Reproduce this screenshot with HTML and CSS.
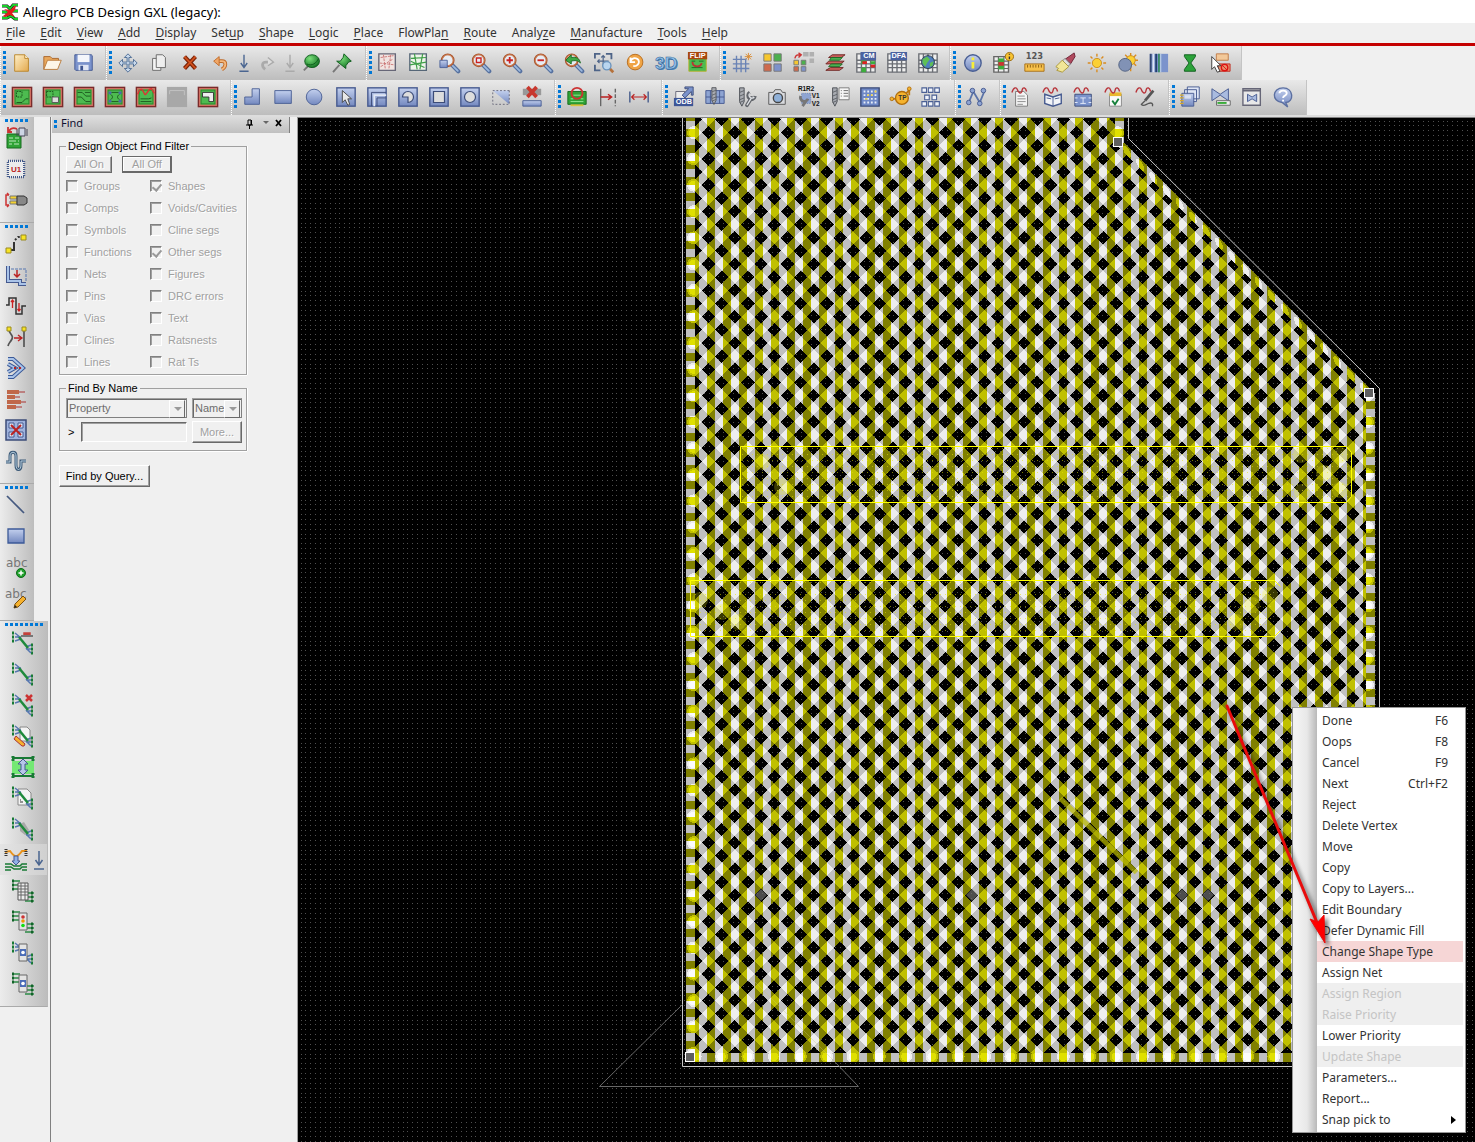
FILE: index.html
```html
<!DOCTYPE html>
<html lang="en">
<head>
<meta charset="utf-8">
<title>Allegro PCB Design GXL (legacy)</title>
<link rel="stylesheet" href="styles.css">
</head>
<body>
<svg class="defs" aria-hidden="true">
  <defs>
    <linearGradient id="gb" x1="0" y1="0" x2="0" y2="1"><stop offset="0" stop-color="#c3d0ee"/><stop offset="1" stop-color="#7388bf"/></linearGradient>
    <linearGradient id="go" x1="0" y1="0" x2="1" y2="1"><stop offset="0" stop-color="#fff0c8"/><stop offset="1" stop-color="#e3a94e"/></linearGradient>
    <radialGradient id="gg" cx=".35" cy=".3" r=".8"><stop offset="0" stop-color="#7be07b"/><stop offset="1" stop-color="#0b6a1c"/></radialGradient>
    <symbol id="pb" viewBox="0 0 24 24"><rect x="1.500" y="1.500" width="21" height="21" fill="#4dbb50" stroke="#7a2a2a" stroke-width="1.500"/><rect x="3" y="3" width="18" height="18" fill="none" stroke="#d86a62" stroke-width="1.500"/><rect x="4.500" y="4.500" width="15" height="15" fill="none" stroke="#2a8a2d"/></symbol>
    <symbol id="mg" viewBox="0 0 24 24"><path d="M14 14l7 7" stroke="#55709f" stroke-width="4.500" stroke-linecap="round"/><path d="M14 14l6.500 6.500" stroke="#9db9dd" stroke-width="2" stroke-linecap="round"/><circle cx="9.500" cy="9" r="6.500" fill="#e6ecf4" stroke="#a8522c" stroke-width="2"/><circle cx="9.500" cy="9" r="6" fill="none" stroke="#e8a070" stroke-width=".7"/></symbol>
    <symbol id="fr" viewBox="0 0 24 24"><rect x="2" y="2" width="20" height="20" fill="url(#gb)" stroke="#45598f" stroke-width="1.500"/></symbol>
    <symbol id="sq" viewBox="0 0 24 24"><path d="M1 7c2-6 5-6 6-3s4 6 5 1 4-3 5 1" fill="none" stroke="#b8343a" stroke-width="1.500"/></symbol>
    <symbol id="dl" viewBox="0 0 24 24"><path d="M1 2h3M1 6h3M1 10h3" stroke="#187a34" stroke-width="3" stroke-dasharray="2 1"/><path d="M4 2l6 5M4 6h6M4 10l6-2" stroke="#5677b0" stroke-width="1.500"/></symbol>
    <symbol id="dr" viewBox="0 0 24 24"><path d="M20 14h3M20 18h3M20 22h3" stroke="#187a34" stroke-width="3" stroke-dasharray="2 1"/><path d="M20 14l-5 2M20 18h-5M20 22l-5-5" stroke="#5677b0" stroke-width="1.500"/></symbol>
    <symbol id="fan" viewBox="0 0 24 24"><use href="#dl"/><use href="#dr"/><path d="M8 6l9 11" stroke="#1f8a3c" stroke-width="2.500"/></symbol>
    <symbol id="gl" viewBox="0 0 24 24"><path d="M1 2h8M1 6h8M1 10h8M14 14h9M14 18h9M14 22h9" stroke="#2b8b46" stroke-width="1.500"/><path d="M1 2h3M1 6h3M1 10h3M20 14h3M20 18h3M20 22h3" stroke="#126329" stroke-width="3" stroke-dasharray="2 1"/></symbol>
    <symbol id="wr" viewBox="0 0 24 24"><path d="M13 21l5-8" stroke="#63666c" stroke-width="4" stroke-linecap="round"/><path d="M16 7a4 4 0 1 0 6 4" fill="none" stroke="#63666c" stroke-width="3.500"/><path d="M13 21l5-8M16 8a3 3 0 1 0 5 4" fill="none" stroke="#dfe2e6" stroke-width="1.500"/></symbol>
    <symbol id="bit" viewBox="0 0 24 24"><path d="M5 2h5v15l-2.500 5L5 17z" fill="#a9acb2" stroke="#4c4f55"/><path d="M5 7l5-2M5 11l5-2M5 15l5-2M5 18l5-2" stroke="#5c5f65"/></symbol>
    <symbol id="tb" viewBox="0 0 24 24"><path d="M2 2h20v20H2z" fill="#efefef" stroke="#6b6e74" stroke-width="1.500"/><path d="M2 9h20M2 13h20M2 17h20M7 2v20M12 2v20M17 2v20" stroke="#6b6e74" stroke-width="1.500"/></symbol>
    <symbol id="da" viewBox="0 0 12 24"><path d="M6 3v13M2.500 12l3.500 5 3.500-5M1 21h10" fill="none" stroke="currentColor" stroke-width="1.500"/></symbol>
  </defs>
</svg>

<header class="titlebar">
  <svg class="logo" viewBox="0 0 18 18"><path d="M1 3h5l3 3 3-4h5M1 9h4l3 3M1 15h5l4-2 4 3h3M11 8h6" fill="none" stroke="#111" stroke-width="3"/><path d="M1 3h5l3 3 3-4h5M1 9h4l3 3M1 15h5l4-2 4 3h3M11 8h6" fill="none" stroke="#18d22b" stroke-width="1.800"/><path d="M2 13l5-4-4-3 6 1 6-5-1 5-3 3 3 4-5-2-5 2z" fill="#e31b1b"/></svg>
  <h1>Allegro PCB Design GXL (legacy):</h1>
</header>
<nav class="menubar">
  <button><u>F</u>ile</button><button><u>E</u>dit</button><button><u>V</u>iew</button><button><u>A</u>dd</button><button><u>D</u>isplay</button><button>Set<u>u</u>p</button><button><u>S</u>hape</button><button><u>L</u>ogic</button><button><u>P</u>lace</button><button>FlowPla<u>n</u></button><button><u>R</u>oute</button><button>Analy<u>z</u>e</button><button><u>M</u>anufacture</button><button><u>T</u>ools</button><button><u>H</u>elp</button>
</nav>

<div class="toolbars">
  <div class="toolrow">
    <div class="group">
      <button aria-label="New"><svg viewBox="0 0 24 24"><path d="M4 3h11l4 4v14H4z" fill="url(#go)" stroke="#b98329"/><path d="M15 3v4h4" fill="#fff4d8" stroke="#b98329"/></svg></button>
      <button aria-label="Open"><svg viewBox="0 0 24 24"><path d="M2 19V5h7l2 2h7v4" fill="#e9a85c" stroke="#a8652a"/><path d="M2 19L6 9h15l-4 10z" fill="#fdf6e8" stroke="#b97a3a"/></svg></button>
      <button aria-label="Save"><svg viewBox="0 0 24 24"><path d="M2 3h18l1 1v16H3l-1-1z" fill="#7b93cc" stroke="#3f5590"/><path d="M5 3h13v8H5z" fill="#f4f6fb"/><path d="M6 14h11v6H6z" fill="#e0e6f4"/><path d="M8 15h3v5H8z" fill="#3f5590"/></svg></button>
    </div>
    <div class="group">
      <button aria-label="Move"><svg viewBox="0 0 24 24"><path d="M12 2l4 4h-3v5h5V8l4 4-4 4v-3h-5v5h3l-4 4-4-4h3v-5H6v3l-4-4 4-4v3h5V6H8z" fill="#c9d9ec" stroke="#4d6b94"/></svg></button>
      <button aria-label="Copy"><svg viewBox="0 0 24 24"><path d="M5 7h9v13H5z" fill="#f4f4f4" stroke="#666"/><path d="M9 3h7l3 3v11H9z" fill="#eee" stroke="#666"/></svg></button>
      <button aria-label="Delete"><svg viewBox="0 0 24 24"><path d="M6 5l12 13M18 5L6 18" stroke="#7c2308" stroke-width="4.500"/><path d="M6 5l12 13M18 5L6 18" stroke="#d2511d" stroke-width="2"/></svg></button>
      <button aria-label="Undo"><svg viewBox="0 0 24 24"><path d="M7 10h6c5 0 5 6 0 9" fill="none" stroke="#bf6a28" stroke-width="4"/><path d="M7 10h6c5 0 5 6 0 9" fill="none" stroke="#f4b77c" stroke-width="2"/><path d="M4 10l6-5v10z" fill="#f0a767" stroke="#bf6a28"/></svg></button>
      <button class="thin steel" aria-label="Undo list"><svg viewBox="0 0 12 24"><use href="#da"/></svg></button>
      <button aria-label="Redo"><svg viewBox="0 0 24 24"><path d="M17 11h-6c-5 0-5 5-1 8" fill="none" stroke="#aaa" stroke-width="3"/><path d="M13 6l6 5-6 4" fill="#ddd" stroke="#aaa" stroke-width="1.500"/></svg></button>
      <button class="thin grey" aria-label="Redo list"><svg viewBox="0 0 12 24"><use href="#da"/></svg></button>
      <button aria-label="Unfix"><svg viewBox="0 0 24 24"><path d="M2 20l5-5" stroke="#777" stroke-width="2"/><ellipse cx="11" cy="10" rx="8" ry="7" fill="url(#gg)" stroke="#0b5a1a"/><path d="M5 13c6 3 11-1 13-6" fill="none" stroke="#0b5a1a"/></svg></button>
      <button aria-label="Fix"><svg viewBox="0 0 24 24"><path d="M0 22l7-8" stroke="#777" stroke-width="2"/><path d="M12 2l8 8-3 1-3 4v3L4 10h4l3-4z" fill="url(#gg)" stroke="#0b5a1a"/></svg></button>
    </div>
    <div class="group">
      <button aria-label="Unrats all"><svg viewBox="0 0 24 24"><path d="M2 2h18v18H2z" fill="#f1e3e0" stroke="#667" stroke-width="1.500"/><path d="M4 6l14-2M3 12l16 2M7 3l2 15M15 3l-2 15M4 16l13-8" stroke="#c77" stroke-dasharray="3 1"/></svg></button>
      <button aria-label="Rats all"><svg viewBox="0 0 24 24"><path d="M2 2h18v18H2z" fill="#eef4ea" stroke="#567" stroke-width="1.500"/><path d="M3 7l17-1M2 14l18-3M7 2l3 17M16 2l-3 17M3 10l15 7" stroke="#41a04a" stroke-width="1.300"/></svg></button>
      <button aria-label="Zoom points"><svg viewBox="0 0 24 24"><use href="#mg"/><path d="M1 9h8v8H1z" fill="url(#gb)" stroke="#4d6399"/></svg></button>
      <button aria-label="Zoom fit"><svg viewBox="0 0 24 24"><use href="#mg"/><path d="M7 6.500h5v5H7z" fill="none" stroke="#c22" stroke-width="1.500"/></svg></button>
      <button aria-label="Zoom in"><svg viewBox="0 0 24 24"><use href="#mg"/><path d="M6 9h7M9.500 5.500v7" stroke="#c22" stroke-width="2"/></svg></button>
      <button aria-label="Zoom out"><svg viewBox="0 0 24 24"><use href="#mg"/><path d="M6 9h7" stroke="#c22" stroke-width="2"/></svg></button>
      <button aria-label="Zoom previous"><svg viewBox="0 0 24 24"><use href="#mg"/><path d="M3 9l6-6v3c6-1 9 1 10 6-3-3-6-3-10-2v3z" fill="#3faa45" stroke="#1c6a25"/></svg></button>
      <button aria-label="Zoom selection"><svg viewBox="0 0 24 24"><path d="M1 7V2h6M13 2h6v6M1 14v6h6" fill="none" stroke="#4e6488" stroke-width="2"/><path d="M10 4v12M4 10h12M8 6l2-2 2 2M6 8l-2 2 2 2" fill="none" stroke="#4e6488" stroke-width="1.300"/><path d="M17 18l4 4" stroke="#b5713b" stroke-width="3"/><circle cx="14" cy="15" r="4.500" fill="#b9d5ef" stroke="#6b94bd" stroke-width="1.500"/></svg></button>
      <button aria-label="Redraw"><svg viewBox="0 0 24 24"><circle cx="11" cy="11" r="8.500" fill="#f0a445" stroke="#b56a1d"/><path d="M6 6v5h5M6 10c3-6 10-3 9 2-1 3-4 4-6 3" fill="none" stroke="#fff" stroke-width="2"/></svg></button>
      <button aria-label="3D canvas"><svg viewBox="0 0 24 24"><text class="three" x="0" y="20" fill="#4a7fb4">3D</text><text class="three" x="-1" y="19" fill="#8fc0e8" stroke="#315f92" stroke-width=".6">3D</text></svg></button>
      <button aria-label="Flip design"><svg viewBox="0 0 24 24"><path d="M2 7h19v14H2z" fill="#4dbb50" stroke="#b9b030"/><path d="M5 10h4M13 10h5M5 17h12" stroke="#1c6a25"/><path d="M6 11c0 6 9 6 10 1" fill="none" stroke="#b33" stroke-width="2"/><path d="M1 0h21v8H1z" fill="#a9480f"/><text class="tiny" x="3" y="7" fill="#fff">FLIP</text></svg></button>
    </div>
    <div class="group">
      <button aria-label="Grid toggle"><svg viewBox="0 0 24 24"><path d="M6 4v18M11 4v18M16 7v15M2 8h15M2 13h18M2 18h18" stroke="#6a83b5" stroke-width="1.500"/><path d="M19 1v8M15 5h8M16 2l6 6M22 2l-6 6" stroke="#d98b35"/></svg></button>
      <button aria-label="Color"><svg viewBox="0 0 24 24"><path d="M2 2h8v8H2z" fill="#f6c72f" stroke="#777"/><path d="M13 2h8v8h-8z" fill="#4db04d" stroke="#777"/><path d="M2 13h8v8H2z" fill="#cf6a4c" stroke="#777"/><path d="M13 13h8v8h-8z" fill="#7d92cb" stroke="#777"/></svg></button>
      <button aria-label="Color swap"><svg viewBox="0 0 24 24"><path d="M11 0h6v5h-6zM18 0h5v5h-5zM18 7h5v5h-5z" fill="#b0b0b0"/><path d="M1 9h5v5H1z" fill="#f6c72f" stroke="#777"/><path d="M9 9h5v5H9z" fill="#4db04d" stroke="#777"/><path d="M1 16h5v5H1z" fill="#cf6a4c" stroke="#777"/><path d="M9 16h5v5H9z" fill="#7d92cb" stroke="#777"/><path d="M2 7c1-4 3-4 6-4M6 1l3 2-3 3" fill="none" stroke="#c33" stroke-width="1.500"/></svg></button>
      <button aria-label="Cross section"><svg viewBox="0 0 24 24"><path d="M2 20h15l4-3H7zM2 13h16l4-3H5zM5 6h14l4-3H9z" fill="#c9605b" stroke="#6d2422"/><path d="M5 16h12l3-3H8zM6 9h11l3-3H8z" fill="#4caf50" stroke="#1c6a25"/></svg></button>
      <button aria-label="Constraint manager"><svg viewBox="0 0 24 24"><use href="#tb"/><path d="M7 9h5v4H7zM7 17h5v5H7zM17 10h5v3h-5z" fill="#3cae3c"/><path d="M8 10h5v3H8zM17 14h5v3h-5z" fill="#d22"/><path d="M6 0h17v9H6z" fill="#4a62a0"/><text class="tiny" x="9" y="7" fill="#fff">CM</text></svg></button>
      <button aria-label="DFA"><svg viewBox="0 0 24 24"><use href="#tb"/><path d="M5 0h18v9H5z" fill="#4a62a0"/><text class="tiny" x="6" y="7" fill="#fff">DFA</text></svg></button>
      <button aria-label="Global constraints"><svg viewBox="0 0 24 24"><use href="#tb"/><circle cx="12" cy="11" r="7" fill="#4f7fc0" stroke="#234"/><path d="M6 8l5-3 3 3-3 4-2 4-3-4zM14 12l4-2-1 5-3 1z" fill="#5fbf55"/></svg></button>
    </div>
    <div class="group">
      <button aria-label="Show element"><svg viewBox="0 0 24 24"><circle cx="13" cy="12" r="9" fill="url(#gb)" stroke="#4a5f94" stroke-width="1.500"/><path d="M13 6v3M13 11v7" stroke="#f8ee3a" stroke-width="3"/></svg></button>
      <button aria-label="Show constraints"><svg viewBox="0 0 24 24"><path d="M2 5h16v17H2z" fill="#eee" stroke="#666" stroke-width="1.500"/><path d="M2 10h16M2 14h16M2 18h16M7 5v17M13 5v17" stroke="#666" stroke-width="1.300"/><path d="M7 7h6v12H7z" fill="#3cae3c"/><path d="M7 11h6v4H7z" fill="#c33"/><circle cx="19" cy="5" r="4.500" fill="#f8c330" stroke="#9a6a10"/><path d="M19 2v1M19 5v3" stroke="#333" stroke-width="1.500"/></svg></button>
      <button aria-label="Measure"><svg viewBox="0 0 24 24"><text class="num" x="3" y="8" fill="#555">123</text><path d="M2 13h21v8H2z" fill="#f6c14c" stroke="#a66f18"/><path d="M5 14v3M8 14v3M11 14v3M14 14v3M17 14v3M20 14v3" stroke="#8a5a10"/></svg></button>
      <button aria-label="Highlight"><svg viewBox="0 0 24 24"><path d="M22 1l1 4-5 8-6-5z" fill="#b04a5e" stroke="#6d2033"/><path d="M12 7l6 6-3 3-6-6z" fill="#ddd" stroke="#777"/><path d="M9 9l7 7-7 6-6-2 2-2-3-2z" fill="#f2e698" stroke="#a89538"/></svg></button>
      <button aria-label="Sunny"><svg viewBox="0 0 24 24"><path d="M13 2v20M3 12h20M6 5l14 14M20 5L6 19" stroke="#d98b20" stroke-width="1.500"/><circle cx="13" cy="12" r="7" fill="#d6d6d6"/><circle cx="13" cy="12" r="5" fill="#fbd034" stroke="#c98c1d"/></svg></button>
      <button aria-label="Shadow mode"><svg viewBox="0 0 24 24"><path d="M16 1v20M7 9h17M10 3l12 12M22 3L10 15" stroke="#d98b20" stroke-width="1.500"/><circle cx="16" cy="9" r="5" fill="#fbd034" stroke="#c98c1d"/><circle cx="10" cy="14" r="7" fill="#8192b5" stroke="#4f5f80"/></svg></button>
      <button aria-label="Layer priority"><svg viewBox="0 0 24 24"><path d="M3 2h20v20H3z" fill="#7b93cc"/><path d="M4 2v20" stroke="#34466f" stroke-width="2"/><path d="M7 2v20" stroke="#dfe6f4" stroke-width="2"/><path d="M10 2v20" stroke="#25406f" stroke-width="2"/><path d="M13 2v20" stroke="#3f8f6a" stroke-width="2"/><path d="M15 2v20" stroke="#cfe0ee"/></svg></button>
      <button aria-label="Status"><svg viewBox="0 0 24 24"><path d="M7 3h12v2l-5 7 5 7v2H7v-2l5-7-5-7z" fill="#2ca23a" stroke="#0d5c1c"/></svg></button>
      <button aria-label="Cancel selection"><svg viewBox="0 0 24 24"><path d="M8 2h13v7H8z" fill="#f2c899" stroke="#c07a45"/><path d="M10 13h13v8H10z" fill="#e88f6b" stroke="#c02a20"/><circle cx="17" cy="17" r="3.500" fill="none" stroke="#d11" stroke-width="1.500"/><path d="M14 14l6 6" stroke="#d11"/><path d="M3 5v14l3-3 3 6 3-1-3-6h4z" fill="#fff" stroke="#333"/></svg></button>
    </div>
  </div>

  <div class="toolrow">
    <div class="group">
      <button aria-label="General edit"><svg viewBox="0 0 24 24"><use href="#pb"/><path d="M6 6h6v6H6z" fill="none" stroke="#1a541c" stroke-dasharray="2 1"/><path d="M6 18h6l4-4h3" fill="none" stroke="#1a541c"/></svg></button>
      <button aria-label="Placement edit"><svg viewBox="0 0 24 24"><use href="#pb"/><path d="M5 6h7v6H5z" fill="none" stroke="#1a541c" stroke-dasharray="2 1"/><path d="M11 12h7v6h-7z" fill="#ddd" stroke="#555"/></svg></button>
      <button aria-label="Etch edit"><svg viewBox="0 0 24 24"><use href="#pb"/><path d="M5 7h5l4 4h5M5 12h4l5 5h5M13 7h6" fill="none" stroke="#1a541c"/></svg></button>
      <button aria-label="Flow planning"><svg viewBox="0 0 24 24"><use href="#pb"/><path d="M8 7h8M8 17h8M7 9c3 2 3 4 0 6M17 9c-3 2-3 4 0 6" fill="none" stroke="#1a541c"/><path d="M5 6h3v3H5zM16 6h3v3h-3zM5 15h3v3H5zM16 15h3v3h-3z" fill="#4a6ba8"/></svg></button>
      <button aria-label="Signal integrity"><svg viewBox="0 0 24 24"><use href="#pb"/><path d="M3 9c3-8 5-6 7-1s4-6 8-5l3 5" fill="none" stroke="#d33" stroke-width="1.500"/><path d="M6 14h9l3-1M6 17h12" fill="none" stroke="#1a541c"/></svg></button>
      <button disabled aria-label="IC packaging"><svg viewBox="0 0 24 24"><path d="M1 1h22v22H1z" fill="#a8a8a8"/><path d="M4 9V5h16v5" fill="none" stroke="#c4c4c4"/></svg></button>
      <button aria-label="Shape edit"><svg viewBox="0 0 24 24"><use href="#pb"/><path d="M6 7h12v10h-5v-5H6z" fill="#eee" stroke="#333"/></svg></button>
    </div>
    <div class="group">
      <button aria-label="Shape polygon"><svg viewBox="0 0 24 24"><path d="M3 20v-8h8V3h8v17z" fill="url(#gb)" stroke="#4a5f94"/></svg></button>
      <button aria-label="Shape rectangle"><svg viewBox="0 0 24 24"><path d="M2 5h18v14H2z" fill="url(#gb)" stroke="#4a5f94"/></svg></button>
      <button aria-label="Shape circle"><svg viewBox="0 0 24 24"><circle cx="11" cy="12" r="8.500" fill="url(#gb)" stroke="#4a5f94"/></svg></button>
      <button aria-label="Select shape"><svg viewBox="0 0 24 24"><use href="#fr"/><path d="M8 5v13l3-3 3 6 2-1-2-6h4z" fill="#e8e8e8" stroke="#444"/></svg></button>
      <button aria-label="Edit boundary"><svg viewBox="0 0 24 24"><use href="#fr"/><path d="M6 22V7h16M12 22v-9h10" fill="none" stroke="#3c4c78"/><path d="M9 22V10h13" fill="none" stroke="#dfe6f4" stroke-width="2"/></svg></button>
      <button aria-label="Void polygon"><svg viewBox="0 0 24 24"><use href="#fr"/><path d="M12 12H6a6 6 0 1 1 6 6z" fill="#ddd" stroke="#3c4c78" stroke-width="1.300"/></svg></button>
      <button aria-label="Void rectangle"><svg viewBox="0 0 24 24"><use href="#fr"/><path d="M6 6h12v12H6z" fill="#ddd" stroke="#3c4c78" stroke-width="1.300"/></svg></button>
      <button aria-label="Void circle"><svg viewBox="0 0 24 24"><use href="#fr"/><circle cx="12" cy="12" r="6" fill="#ddd" stroke="#3c4c78" stroke-width="1.300"/></svg></button>
      <button aria-label="Void element"><svg viewBox="0 0 24 24"><path d="M3 5h18v15z" fill="url(#gb)"/><path d="M21 5v15H3V5z" fill="none" stroke="#667" stroke-dasharray="2 2"/></svg></button>
      <button aria-label="Delete islands"><svg viewBox="0 0 24 24"><path d="M2 3h20v7H2z" fill="#999"/><path d="M7 1l10 11M17 1L7 12" stroke="#c8382e" stroke-width="4"/><path d="M2 16h20v6H2z" fill="url(#gb)" stroke="#4a5f94"/></svg></button>
    </div>
    <div class="group">
      <button aria-label="Net short"><svg viewBox="0 0 24 24"><path d="M2 6h20v14H2z" fill="#2fa336" stroke="#176a1e"/><path d="M5 21h14" stroke="#d8c33a" stroke-width="2"/><path d="M5 14h3M16 14h3M5 17h14M8 10h8" stroke="#9e9"/><circle cx="12" cy="8" r="6" fill="none" stroke="#c33" stroke-width="2"/></svg></button>
      <button aria-label="Spacing"><svg viewBox="0 0 24 24"><path d="M4 3v19" stroke="#666" stroke-width="1.500"/><path d="M20 3v19" stroke="#666" stroke-width="1.500" stroke-dasharray="4 2"/><path d="M4 12h11M12 9l4 3-4 3" fill="none" stroke="#b22" stroke-width="1.500"/></svg></button>
      <button aria-label="Dimension"><svg viewBox="0 0 24 24"><path d="M2 6v12M22 6v12" stroke="#445a8a" stroke-width="1.500"/><path d="M4 12h16M7 9l-3 3 3 3M17 9l3 3-3 3" fill="none" stroke="#b22" stroke-width="1.300"/></svg></button>
    </div>
    <div class="group">
      <button aria-label="ODB export"><svg viewBox="0 0 24 24"><path d="M3 6h10v8H3z" fill="#eee" stroke="#667"/><path d="M10 10l7-7h-4V1h9v9h-2V6l-7 7z" fill="#7b93cc" stroke="#3c4c78"/><path d="M1 13h21v9H1z" fill="#3d5596"/><text class="tiny" x="3" y="20" fill="#fff">ODB</text></svg></button>
      <button aria-label="NC drill"><svg viewBox="0 0 24 24"><path d="M2 5h20v14H2zM2 12h20M7 5v14M17 5v14" fill="#8ea4d2" stroke="#45598f"/><svg x="4" width="24" height="24"><use href="#bit"/></svg></svg></button>
      <button aria-label="NC parameters"><svg viewBox="0 0 24 24"><use href="#bit"/><use href="#wr"/></svg></button>
      <button aria-label="Artwork"><svg viewBox="0 0 24 24"><path d="M3 7h5l2-3h6l2 3h3v13H3z" fill="#d7d9dd" stroke="#555"/><circle cx="13" cy="13" r="5" fill="#8fb0d8" stroke="#444" stroke-width="1.500"/></svg></button>
      <button aria-label="Auto rename"><svg viewBox="0 0 24 24"><path d="M5 8h10v11H5z" fill="#8ea4d2" stroke="#6a83b5" stroke-dasharray="1 1"/><path d="M6 22l5-7M4 11a3 3 0 1 0 8 3" fill="none" stroke="#777" stroke-width="3"/><text class="micro" x="1" y="5" fill="#111">R1R2</text><text class="micro" x="16" y="13" fill="#111">V1</text><text class="micro" x="16" y="22" fill="#111">V2</text></svg></button>
      <button aria-label="Drill legend"><svg viewBox="0 0 24 24"><use href="#bit"/><path d="M12 2h11v13H12z" fill="#f6f6f6" stroke="#777"/><path d="M14 5h1M17 5h5M14 8h1M17 8h5M14 11h1M17 11h5" stroke="#666"/></svg></button>
      <button aria-label="Thieving"><svg viewBox="0 0 24 24"><path d="M2 2h20v20H2z" fill="#6e88c6" stroke="#3c4c78" stroke-width="1.500"/><path d="M5 6h14M5 10h14M5 14h14M5 18h14" stroke="#e7edf8" stroke-width="2" stroke-dasharray="2 2"/><path d="M9 10h6M7 14h2M17 6h2" stroke="#f1d34a" stroke-width="2" stroke-dasharray="2 2"/></svg></button>
      <button aria-label="Testprep"><svg viewBox="0 0 24 24"><path d="M2 14h5M17 9l4-5v6" fill="none" stroke="#c07a10" stroke-width="2"/><circle cx="13" cy="13" r="7" fill="#f5b32d" stroke="#b06d0c" stroke-width="1.500"/><circle cx="21" cy="3" r="2" fill="#f5b32d" stroke="#b06d0c"/><circle cx="2" cy="14" r="2" fill="#f5b32d" stroke="#b06d0c"/><text class="micro" x="9" y="15" fill="#333">TP</text></svg></button>
      <button aria-label="Panelize"><svg viewBox="0 0 24 24"><path d="M1 2h5v5H1zM8 2h5v5H8zM15 2h5v5h-5zM4 10h5v5H4zM12 10h5v5h-5zM1 17h5v5H1zM8 17h5v5H8zM15 17h5v5h-5z" fill="#f0f4fb" stroke="#4a5f94" stroke-width="1.200"/></svg></button>
    </div>
    <div class="group">
      <button aria-label="Signal probe"><svg viewBox="0 0 24 24"><path d="M3 18l5-12 7 12 5-12" fill="none" stroke="#5c74a8" stroke-width="2"/><g fill="#8ea4d2" stroke="#45598f"><circle cx="3" cy="18" r="2.500"/><circle cx="7" cy="5" r="2.500"/><circle cx="15" cy="19" r="2.500"/><circle cx="19" cy="5" r="2.500"/></g></svg></button>
    </div>
    <div class="group">
      <button aria-label="Signal model"><svg viewBox="0 0 24 24"><path d="M5 6h9l4 4v12H5z" fill="#f4f4f4" stroke="#777"/><path d="M7 11h8M7 14h9M7 17h9M7 20h6" stroke="#888"/><use href="#sq"/></svg></button>
      <button aria-label="Signal library"><svg viewBox="0 0 24 24"><path d="M3 9l9 3 9-3v10l-9 3-9-3z" fill="#f2f4f8" stroke="#45598f" stroke-width="1.500"/><path d="M12 12v10M5 13l5 1M14 14l5-1" stroke="#45598f"/><use href="#sq"/></svg></button>
      <button aria-label="Model assign"><svg viewBox="0 0 24 24"><path d="M2 9h18v13H2z" fill="#7b93cc" stroke="#3c4c78"/><path d="M2 13h3M2 18h3M17 13h3M17 18h3M8 13h6M11 13v6M8 19h6" stroke="#e8eefa"/><use href="#sq"/></svg></button>
      <button aria-label="Signal audit"><svg viewBox="0 0 24 24"><path d="M6 9h13v13H6z" fill="#fafafa" stroke="#888"/><path d="M6 9h13" stroke="#e9b82f" stroke-width="4"/><path d="M9 16l3 4 4-6" fill="none" stroke="#15803a" stroke-width="2"/><use href="#sq"/></svg></button>
      <button aria-label="Probe"><svg viewBox="0 0 24 24"><path d="M20 5l-9 11" stroke="#555" stroke-width="3"/><path d="M11 16l-4 4c2 3 5 0 8-1s5 0 4 3" fill="none" stroke="#555" stroke-width="1.500"/><use href="#sq"/></svg></button>
    </div>
    <div class="group">
      <button aria-label="Reports"><svg viewBox="0 0 24 24"><path d="M8 1h13v13H8zM5 4h13v13H5z" fill="#dfe6f5" stroke="#45598f"/><path d="M2 8h13v14H2z" fill="url(#gb)" stroke="#45598f"/><path d="M5 11h7M5 13h7" stroke="#fff"/><path d="M0 10h4M0 13h4M0 16h4M0 19h4" stroke="#d8a92a" stroke-width="1.500"/></svg></button>
      <button aria-label="DRC update"><svg viewBox="0 0 24 24"><path d="M1 3l9 6 9-6v13l-9-6-9 6z" fill="#a9bbdf" stroke="#45598f"/><path d="M6 16h15v5H6z" fill="#eee" stroke="#666"/><path d="M7 18.500h10" stroke="#3a3" stroke-width="2"/></svg></button>
      <button aria-label="DRC browser"><svg viewBox="0 0 24 24"><path d="M1 3h19v18H1z" fill="#e8e8e8" stroke="#667" stroke-width="1.500"/><path d="M1 5h19" stroke="#667" stroke-width="2"/><path d="M6 9l5 3 5-3v8l-5-3-5 3z" fill="#a9bbdf" stroke="#45598f"/></svg></button>
      <button aria-label="Help"><svg viewBox="0 0 24 24"><path d="M11 2c12 0 12 16 3 16l2 5-6-5C-2 17-1 2 11 2z" fill="url(#gb)" stroke="#5b6fa0" stroke-width="1.500"/><path d="M7 8c0-4 8-4 8 0 0 3-4 2-4 5M11 15v2" fill="none" stroke="#fff" stroke-width="2"/></svg></button>
    </div>
  </div>
</div>

<main class="workspace">
  <aside class="sidebar">
    <div class="vgroup">
      <button aria-label="Place manual"><svg viewBox="0 0 24 24"><path d="M3 8h14v14H3z" fill="#2fa336" stroke="#176a1e"/><path d="M5 12h4M11 12h4M5 15h7M14 15h1M5 18h3M10 18h5" stroke="#bfe8bf"/><path d="M15 2h6v8h-6zM13 3v7M23 3v7" fill="#ccd5e4" stroke="#445"/><path d="M13 3c-4-2-6-1-8 2M4 1v5h4" fill="none" stroke="#c33" stroke-width="1.800"/></svg></button>
      <button aria-label="Assign refdes"><svg viewBox="0 0 24 24"><rect x="4" y="4" width="16" height="16" fill="#ececec" stroke="#445a8a" stroke-width="2.500" stroke-dasharray="1 1"/><rect x="5" y="5" width="14" height="14" fill="#ececec"/><text class="tiny" x="7" y="15" fill="#b22">U1</text></svg></button>
      <button aria-label="Swap"><svg viewBox="0 0 24 24"><path d="M5 7H2v10h3M5 7l-2-2M5 17l-2 2" fill="none" stroke="#c33" stroke-width="1.500"/><path d="M6 8h7v3H6zM6 13h7v3H6z" fill="#f5d22f" stroke="#777"/><path d="M13 8h7l3 2v5l-3 2h-7z" fill="#888" stroke="#333"/></svg></button>
    </div>
    <div class="vgroup">
      <button aria-label="Add connect"><svg viewBox="0 0 24 24"><path d="M5 18h5v-8" fill="none" stroke="#333" stroke-width="2"/><path d="M11 8l3-3h4" fill="none" stroke="#333" stroke-width="2" stroke-dasharray="2 2"/><path d="M2 16h5v5H2zM17 3h5v5h-5z" fill="#f7e424" stroke="#9a8a20"/></svg></button>
      <button aria-label="Slide"><svg viewBox="0 0 24 24"><path d="M4 3v15h12v3h6" fill="none" stroke="#45598f" stroke-width="4"/><path d="M4 3v15h12v3h6" fill="none" stroke="#a9c3e8" stroke-width="2"/><path d="M7 6h15v12" fill="none" stroke="#5677b0" stroke-dasharray="3 1"/><path d="M13 7v7M10 11l3 3 3-3" fill="none" stroke="#b22" stroke-width="1.500"/></svg></button>
      <button aria-label="Delay tune"><svg viewBox="0 0 24 24"><path d="M2 11h3V4h7v16h6v-8h4" fill="none" stroke="#333" stroke-width="1.500"/><path d="M8.500 14V6M7 8l1.500-2L10 8M15 9v8M13.500 15l1.500 2 1.500-2" fill="none" stroke="#c22" stroke-width="1.300"/></svg></button>
      <button aria-label="Custom smooth"><svg viewBox="0 0 24 24"><path d="M5 5c0 4 5 5 3 9s-3 3-4 7M20 5v17" fill="none" stroke="#555" stroke-width="1.700"/><path d="M3 2h4v4H3zM18 2h4v4h-4z" fill="#f7e424" stroke="#9a8a20"/><path d="M10 13h7M14 10l4 3-4 3" fill="none" stroke="#b22" stroke-width="1.300"/></svg></button>
      <button aria-label="Spread"><svg viewBox="0 0 24 24"><path d="M4 3h5l10 9-10 9H4M4 8l7 4-7 4" fill="none" stroke="#3c5a98" stroke-width="4"/><path d="M4 3h5l10 9-10 9H4M4 8l7 4-7 4" fill="none" stroke="#a9c3e8" stroke-width="2"/><path d="M10 12h10" stroke="#b22" stroke-width="2" stroke-dasharray="2 3"/></svg></button>
      <button aria-label="Fanout"><svg viewBox="0 0 24 24"><path d="M3 5h12M3 10h8M3 15h14M3 20h9" stroke="#c0684a" stroke-width="4"/><path d="M15 5h6M11 10h5M17 15h5M12 20h6" stroke="#a33"/></svg></button>
      <button aria-label="Auto route"><svg viewBox="0 0 24 24"><path d="M2 2h20v20H2z" fill="#9fb3de" stroke="#3c4c78" stroke-width="1.500"/><path d="M5 5h5v5H5zM14 5h5v5h-5zM5 14h5v5H5zM14 14h5v5h-5z" fill="#dfe8f7" stroke="#45598f"/><path d="M7 7l10 10M17 7L7 17" stroke="#b22" stroke-width="2"/></svg></button>
      <button aria-label="Snake"><svg viewBox="0 0 24 24"><path d="M2 13h4V7c0-5 6-5 6 0v9c0 6 5 6 5 0v-4h5" fill="none" stroke="#3c5a78" stroke-width="3"/><path d="M2 13h4V7c0-5 6-5 6 0v9c0 6 5 6 5 0v-4h5" fill="none" stroke="#b8cfdf"/></svg></button>
    </div>
    <div class="vgroup">
      <button aria-label="Add line"><svg viewBox="0 0 24 24"><path d="M3 3l17 17" stroke="#44587f" stroke-width="1.700"/></svg></button>
      <button aria-label="Add rectangle"><svg viewBox="0 0 24 24"><path d="M4 5h16v14H4z" fill="url(#gb)" stroke="#3c5a98" stroke-width="1.300"/></svg></button>
      <button aria-label="Add text"><svg viewBox="0 0 24 24"><text class="abc" x="2" y="12" fill="#777">abc</text><circle cx="17" cy="18" r="4.500" fill="#1fa02b" stroke="#0d6a18"/><path d="M14.500 18h5M17 15.500v5" stroke="#fff" stroke-width="1.500"/></svg></button>
      <button aria-label="Edit text"><svg viewBox="0 0 24 24"><text class="abc" x="1" y="12" fill="#777">abc</text><path d="M10 22l1-4 8-8 3 3-8 8z" fill="#f5b12e" stroke="#7a5010"/><path d="M10 22l1-3 2 2z" fill="#222"/></svg></button>
    </div>
    <div class="vgroup wide">
      <button aria-label="Create flow"><svg viewBox="0 0 24 24"><use href="#fan"/><path d="M10 5h12" stroke="#777" stroke-width="2"/><path d="M13 4V2h6v2" fill="#c4423b" stroke="#c4423b" stroke-width="1.500"/></svg></button>
      <button aria-label="Edit flow"><svg viewBox="0 0 24 24"><use href="#fan"/></svg></button>
      <button aria-label="Delete flow"><svg viewBox="0 0 24 24"><use href="#fan"/><path d="M15 2l6 6M21 2l-6 6" stroke="#c33" stroke-width="2.500"/></svg></button>
      <button aria-label="Bundle properties"><svg viewBox="0 0 24 24"><path d="M9 3h7l3 3v11H9z" fill="#f4f4f4" stroke="#888"/><use href="#fan"/><path d="M5 12l9 8-1 2-2 0-8-7z" fill="#f5b12e" stroke="#a33"/></svg></button>
      <button aria-label="Flow space"><svg viewBox="0 0 24 24"><path d="M1 6h22v13H1z" fill="#74e874"/><path d="M1 3h22M1 21h22" stroke="#187a34" stroke-width="2"/><path d="M2 1v6M22 1v6M2 18v6M22 18v6" stroke="#187a34" stroke-width="3" stroke-dasharray="2 1"/><path d="M12 4l5 5h-3v6h3l-5 5-5-5h3V9H7z" fill="#b6c6e8" stroke="#45598f"/></svg></button>
      <button aria-label="Flow report"><svg viewBox="0 0 24 24"><path d="M7 3h9l4 4v12H7z" fill="#f4f4f4" stroke="#888"/><use href="#fan"/><path d="M9 14h1M9 16h3" stroke="#333"/></svg></button>
      <button aria-label="Flow curve"><svg viewBox="0 0 24 24"><path d="M9 7l4-2 5 8-4 5-5-4z" fill="#a8a8a8"/><use href="#fan"/></svg></button>
      <div class="split">
        <button aria-label="Plan"><svg viewBox="0 0 24 24"><path d="M1 4l5-1c5 7 7 7 12 0h5" fill="none" stroke="#e8931d" stroke-width="2"/><path d="M2 1v8M22 1v8" stroke="#333" stroke-width="3" stroke-dasharray="1 1"/><path d="M10 8h4v5h2l-4 4-4-4h2z" fill="#8fb0e6" stroke="#45598f"/><path d="M1 16h6l3 2h6l2-2h5M1 19h6l3 2h6l2-2h5M1 22h6M18 22h5" fill="none" stroke="#187a34" stroke-width="1.500"/></svg></button>
        <button class="thin steel" aria-label="Plan options"><svg viewBox="0 0 12 24"><use href="#da"/></svg></button>
      </div>
      <button aria-label="Plan table"><svg viewBox="0 0 24 24"><use href="#gl"/><path d="M7 4h10v17H7z" fill="#eee" stroke="#555"/><path d="M7 7h10M7 10h10M7 13h10M7 16h10M10 4v17M14 4v17" stroke="#666"/></svg></button>
      <button aria-label="Plan status"><svg viewBox="0 0 24 24"><use href="#gl"/><path d="M8 3h8v17H8z" fill="#e4e4e4" stroke="#666"/><circle cx="12" cy="7" r="1.800" fill="#c33"/><circle cx="12" cy="11" r="1.800" fill="#e90"/><circle cx="12" cy="15.500" r="1.800" fill="#1d1"/></svg></button>
      <button aria-label="Convert bundle"><svg viewBox="0 0 24 24"><use href="#dl"/><use href="#dr"/><path d="M8 3h8v17H8z" fill="#e4e4e4" stroke="#666"/><path d="M9 8h6v7H9z" fill="#4a6cb8"/><circle cx="12" cy="11.500" r="1.800" fill="#fff"/></svg></button>
      <button aria-label="Convert plan"><svg viewBox="0 0 24 24"><use href="#gl"/><path d="M8 3h8v17H8z" fill="#e4e4e4" stroke="#666"/><path d="M9 8h6v7H9z" fill="#4a6cb8"/><circle cx="12" cy="11.500" r="1.800" fill="#fff"/></svg></button>
    </div>
  </aside>

  <section class="find">
    <header class="find-head">
      <h2>Find</h2>
      <svg class="head-icons" viewBox="0 0 40 12"><path d="M3 3h3v5H3zM1 8h7M4.500 8v4M6.500 3v5" fill="none" stroke="#000"/><path d="M18 4h6l-3 3z" fill="#666"/><path d="M31 3l5 6M36 3l-5 6" stroke="#000" stroke-width="1.800"/></svg>
    </header>
    <form class="find-body">
      <fieldset>
        <legend>Design Object Find Filter</legend>
        <div class="pair">
          <button type="button" disabled>All On</button>
          <button type="button" class="default" disabled>All Off</button>
        </div>
        <div class="checks">
          <label><input type="checkbox" disabled>Groups</label><label><input type="checkbox" disabled checked>Shapes</label>
          <label><input type="checkbox" disabled>Comps</label><label><input type="checkbox" disabled>Voids/Cavities</label>
          <label><input type="checkbox" disabled>Symbols</label><label><input type="checkbox" disabled>Cline segs</label>
          <label><input type="checkbox" disabled>Functions</label><label><input type="checkbox" disabled checked>Other segs</label>
          <label><input type="checkbox" disabled>Nets</label><label><input type="checkbox" disabled>Figures</label>
          <label><input type="checkbox" disabled>Pins</label><label><input type="checkbox" disabled>DRC errors</label>
          <label><input type="checkbox" disabled>Vias</label><label><input type="checkbox" disabled>Text</label>
          <label><input type="checkbox" disabled>Clines</label><label><input type="checkbox" disabled>Ratsnests</label>
          <label><input type="checkbox" disabled>Lines</label><label><input type="checkbox" disabled>Rat Ts</label>
        </div>
      </fieldset>
      <fieldset class="by-name">
        <legend>Find By Name</legend>
        <div class="name-grid">
          <span class="combo"><select disabled aria-label="Object type"><option>Property</option></select></span>
          <span class="combo"><select disabled aria-label="Match by"><option>Name</option></select></span>
          <label class="entry">&gt;<input type="text" disabled></label>
          <button type="button" disabled>More...</button>
        </div>
      </fieldset>
      <button type="button" class="query">Find by Query...</button>
    </form>
  </section>

  <section class="board">
    <canvas id="board"></canvas>
    <menu class="context">
      <li><button>Done<kbd>F6</kbd></button></li>
      <li><button>Oops<kbd>F8</kbd></button></li>
      <li><button>Cancel<kbd>F9</kbd></button></li>
      <li><button>Next<kbd>Ctrl+F2</kbd></button></li>
      <li><button>Reject</button></li>
      <li><button>Delete Vertex</button></li>
      <li><button>Move</button></li>
      <li><button>Copy</button></li>
      <li><button>Copy to Layers...</button></li>
      <li><button>Edit Boundary</button></li>
      <li><button>Defer Dynamic Fill</button></li>
      <li><button class="active">Change Shape Type</button></li>
      <li><button>Assign Net</button></li>
      <li><button disabled>Assign Region</button></li>
      <li><button disabled>Raise Priority</button></li>
      <li><button>Lower Priority</button></li>
      <li><button disabled>Update Shape</button></li>
      <li><button>Parameters...</button></li>
      <li><button>Report...</button></li>
      <li><button>Snap pick to<i class="more"></i></button></li>
    </menu>
    <svg class="arrow" viewBox="0 0 110 250"><path d="M7 5l91 219" stroke="#e80c0c" stroke-width="3" stroke-linecap="round"/><path d="M105 242L90 218l8 3 6-7z" fill="#f00" stroke="#e80c0c"/></svg>
  </section>
</main>
<script src="board.js"></script>
</body>
</html>
```
FILE: styles.css
```css
* { box-sizing: border-box; }
body {
  margin: 0;
  min-height: 100vh;
  display: flex;
  flex-direction: column;
  background: #f0f0f0;
  font: 12px/20px "Noto Sans", "Open Sans", sans-serif;
  color: #333;
  overflow: hidden;
}
button { border: 0; padding: 0; background: none; font: inherit; color: inherit; }
h1, h2 { margin: 0; font-weight: 400; }
.defs { position: absolute; width: 0; height: 0; }

.titlebar { display: flex; align-items: center; gap: 4px; height: 23px; padding-left: 1px; background: #fff; }
.titlebar h1 { font-size: 13px; color: #000; }
.logo { width: 18px; height: 18px; }
.menubar { display: flex; gap: 15px; height: 23px; padding-left: 6px; border-bottom: 3px solid #c40000; }
.menubar u { text-underline-offset: 2px; }

/* Toolbars */
.toolbars { border-bottom: 2px solid #ddd; }
.toolrow { display: flex; height: 34px; }
.toolrow + .toolrow { height: 35px; }
.group {
  position: relative;
  display: flex;
  align-items: flex-start;
  padding: 0 6px 0 5px;
  background: linear-gradient(#e9e9e9, #bdbdbd);
  border-left: 1px dotted #fff;
  border-right: 1px solid #c4c4c4;
}
.toolrow + .toolrow .group { padding-right: 7px; }
.group::before {
  content: "";
  position: absolute;
  left: 2px;
  top: 5px;
  width: 3px;
  height: 23px;
  background: repeating-linear-gradient(#0078d7 0 3px, transparent 3px 5px);
}
.group button, .vgroup button { display: flex; align-items: center; justify-content: center; width: 31px; height: 31px; flex: none; }
.group button { height: 33px; }
.group svg { width: 22px; height: 22px; }
.vgroup svg { width: 24px; height: 24px; }
.group svg, .vgroup svg { overflow: visible; fill: none; }
.group .thin, .vgroup .thin { width: 15px; }
.thin svg { width: 12px; }
.steel { color: #4a6590; }
.grey { color: #aaa; }
.three { font: bold 19px "Liberation Sans", sans-serif; }
.tiny { font: bold 8px "Liberation Sans", sans-serif; }
.micro { font: bold 7px "Liberation Sans", sans-serif; }
.num { font: bold 9px "DejaVu Sans", sans-serif; }
.abc { font: 12px "DejaVu Sans", sans-serif; }

/* Workspace */
.workspace { flex: 1; display: flex; min-height: 0; }
.sidebar { width: 51px; flex: none; border-right: 1px solid #808080; margin-right: 1px; }
.vgroup {
  position: relative;
  width: 34px;
  padding: 5px 0 7px;
  background: linear-gradient(90deg, #ececec, #bdbdbd);
  border-bottom: 1px solid #aaa;
}
.vgroup::before {
  content: "";
  position: absolute;
  left: 5px;
  top: 2px;
  width: 23px;
  height: 3px;
  background: repeating-linear-gradient(90deg, #0078d7 0 3px, transparent 3px 5px);
}
.vgroup.wide { width: 48px; padding: 6px 0 7px 7px; border-right: 1px solid #bbb; }
.vgroup.wide::before { width: 38px; }
.split { display: flex; height: 31px; margin-left: -7px; background: linear-gradient(90deg, #e4e4e4, #d0d0d0); }

/* Find panel */
.find { width: 245px; flex: none; font: 11px/13px "Liberation Sans", Arial, sans-serif; color: #000; }
.find-head {
  position: relative;
  display: flex;
  align-items: center;
  justify-content: space-between;
  width: 238px;
  height: 16px;
  padding: 0 4px 5px 9px;
  border-right: 1px solid #808080;
  background: linear-gradient(#dcdcdc, #c0c0c0);
}
.find-head::before { content: ""; position: absolute; left: 2px; top: 3px; width: 3px; height: 8px; background: repeating-linear-gradient(#0078d7 0 3px, transparent 3px 5px); }
.find-head h2 { font: 11px/13px "Noto Sans", sans-serif; color: #101030; }
.head-icons { width: 40px; height: 12px; }
.find-body { padding: 7px 0 0 7px; }
fieldset { width: 188px; height: 235px; margin: 0; padding: 3px 4px 0 6px; border: 1px solid #a0a0a0; box-shadow: 1px 0 #fff, 0 1px #fff; }
legend { padding: 0 2px; margin-left: 0; }
.pair { display: flex; gap: 10px; }
.find-body button {
  height: 17px;
  border: 1px solid;
  border-color: #fff #696969 #696969 #fff;
  box-shadow: inset -1px -1px #a0a0a0;
  background: #f0f0f0;
}
.find-body button:disabled, .checks { color: #a0a0a0; text-shadow: 1px 1px #fff; }
.pair button { width: 46px; }
.find-body .default { width: 50px; border-color: #696969; box-shadow: inset -1px -1px #696969, inset 1px 1px #fff; }
.checks { display: grid; grid-template-columns: 84px 1fr; grid-auto-rows: 22px; padding-top: 2px; }
.checks label { display: flex; align-items: center; gap: 6px; white-space: nowrap; }
input[type="checkbox"] {
  appearance: none;
  position: relative;
  width: 12px;
  height: 12px;
  margin: 0;
  border: 1px solid;
  border-color: #808080 #fff #fff #808080;
  box-shadow: inset 1px 1px #a0a0a0;
}
input[type="checkbox"]:checked::after {
  content: "";
  position: absolute;
  left: 3px;
  top: 1px;
  width: 4px;
  height: 7px;
  border: solid #999;
  border-width: 0 2px 2px 0;
  transform: rotate(40deg);
}
.by-name { height: 69px; margin-top: 7px; padding-top: 3px; }
.name-grid { display: grid; grid-template-columns: 121px 50px; gap: 3px 5px; }
.combo { position: relative; display: block; height: 20px; }
.combo::after {
  content: "";
  position: absolute;
  right: 5px;
  top: 9px;
  border: 4px solid transparent;
  border-top-color: #999;
  border-bottom: 0;
}
.combo::before { content: ""; position: absolute; right: 2px; top: 2px; width: 14px; height: 16px; border: 1px solid; border-color: #fff #696969 #696969 #fff; }
.combo select {
  appearance: none;
  width: 100%;
  height: 20px;
  padding: 0 0 0 2px;
  border: 1px solid;
  border-color: #a0a0a0 #808080 #808080 #a0a0a0;
  border-radius: 0;
  background: #f0f0f0;
  box-shadow: inset 1px 1px #696969;
  color: #6d6d6d;
  opacity: 1;
  font: inherit;
}
.entry { display: flex; align-items: center; gap: 7px; padding-left: 2px; }
.entry input { flex: 1; min-width: 0; height: 20px; border: 1px solid; border-color: #696969 #fff #fff #696969; background: #f0f0f0; box-shadow: inset 1px 1px #a0a0a0; }
.name-grid button { height: 22px; }
.find-body .query { width: 91px; height: 22px; margin-top: 14px; }

/* Board */
.board { position: relative; flex: 1; min-width: 0; overflow: hidden; background: #000; border-left: 1px solid #a0a0a0; border-top: 1px solid #808080; }
.board canvas { display: block; position: absolute; inset: 0; }
.context {
  position: absolute;
  left: 994px;
  top: 589px;
  width: 174px;
  margin: 0;
  padding: 2px 2px 2px 24px;
  list-style: none;
  border: 1px solid #979797;
  background: linear-gradient(#fff, #fff) 24px 0 / 148px 100% no-repeat, linear-gradient(90deg, #f2f2f2 4px, #e8e8e8, #b9b9b9) 0 0 / 24px 100% no-repeat;
}
.context button { display: flex; align-items: center; justify-content: space-between; width: 100%; height: 21px; padding: 0 15px 0 5px; color: #333; }
.context kbd { font: inherit; }
.context button:disabled { background: #efefef; color: #c4c4c4; }
.context .active { background: #f6d6d6; }
.more { border: 4px solid transparent; border-left: 5px solid #000; border-right: 0; margin-right: -8px; }
.arrow { position: absolute; left: 922px; top: 583px; width: 110px; height: 250px; overflow: visible; fill: none; filter: drop-shadow(3px 3px 2px rgba(0, 0, 0, .6)); }
```
FILE: board.js
```js
const canvas = document.getElementById('board');
const ctx = canvas.getContext('2d');
const host = canvas.parentElement;

// Design coordinates of the view's top left corner.
const VX = 298, VY = 118;
const HATCH = 26.3, GRID = 4.86, EDGE = 9;
const LEFT = 686, RIGHT = 1374, BOTTOM = 1062, CHAMFER = 1123 - 142;

const mod = (a, n) => ((a % n) + n) % n;
const wrap = (a, n) => { const m = mod(a, n); return m > n / 2 ? m - n : m; };

// Distance inward from each side of the filled shape.
function sides(x, y) {
  const diag = y < 143 ? 1123 - x : Math.min(RIGHT - x, (CHAMFER + y - x) / Math.SQRT2);
  return [x - LEFT, diag, BOTTOM - y];
}

function shade(x, y) {
  const [l, r, b] = sides(x, y);
  if (l < 0 || r < 0 || b <= 0) return null;
  const onLeft = l < EDGE, onRight = RIGHT - x < EDGE || (y < 143 && r < EDGE);
  const onSlope = !onRight && r < EDGE - 2;
  const onBottom = b <= EDGE;
  const yellow = (onLeft || onRight) ? mod(y - 993, 16) < 8 : mod(x - 707, 16) < 8;
  let level;
  if (onLeft || onRight || onBottom || onSlope) {
    let dx, dy;
    if (onBottom) { dx = wrap(x - 721, HATCH); dy = y - 1056; }
    else if (onLeft) { dx = x - 693; dy = wrap(y - 973.7, HATCH); }
    else if (onRight) { dx = x - (y < 143 ? 1117 : 1367); dy = wrap(y - 973.7, HATCH); }
    else { dx = wrap(x - 1126.500, HATCH / 2); dy = (r - 4) * 1.3; }
    const reach = dx * dx + dy * dy;
    level = onSlope ? (reach < 16 ? 2 : 1) : reach < 20 ? 3 : reach < 40 ? 2 : 1;
  } else {
    const u = Math.abs(wrap(x + y - 840, HATCH)), v = Math.abs(wrap(x - y - 576, HATCH));
    const gu = u < 6.7, gv = v < 6.7;
    if (gu && gv) return [0, 0, 0];
    level = gu || gv ? 1 : 2;
  }
  return yellow ? [null, [128, 128, 0], [192, 192, 0], [224, 224, 0]][level]
                : [null, [192, 192, 192], [238, 238, 238], [252, 252, 252]][level];
}

function line(points, color, width = 1) {
  ctx.strokeStyle = color;
  ctx.lineWidth = width;
  ctx.beginPath();
  points.forEach(([x, y]) => ctx.lineTo(x + .5, y + .5));
  ctx.stroke();
}

function draw() {
  const w = canvas.width = host.clientWidth;
  const h = canvas.height = host.clientHeight;
  const image = ctx.createImageData(w, h);
  const d = image.data;
  for (let j = 0; j < h; j++) {
    for (let i = 0; i < w; i++) {
      const c = shade(i + VX, j + VY) || [0, 0, 0];
      const k = (j * w + i) * 4;
      d[k] = c[0]; d[k + 1] = c[1]; d[k + 2] = c[2]; d[k + 3] = 255;
    }
  }
  for (let y = 3; y < h; y += GRID) {
    for (let x = 3; x < w; x += GRID) {
      const k = (Math.floor(y) * w + Math.floor(x)) * 4;
      if (d[k] === 0) d[k] = d[k + 1] = d[k + 2] = 80;
    }
  }
  ctx.putImageData(image, 0, 0);
  ctx.save();
  ctx.translate(-VX, -VY);

  line([[1128, 100], [1128, 138], [1379, 388], [1379, 1066], [682, 1066], [682, 100]], '#c8c8c8');
  line([[682, 1004], [599, 1086], [858, 1086], [835, 1062]], '#666');
  line([[835, 1062], [750, 977]], 'rgba(200,200,120,.35)');

  // Component pads seen through the fill.
  ctx.fillStyle = 'rgba(255,255,0,.22)';
  for (const [x, y] of [[762, 462], [782, 487], [1301, 455], [1324, 473], [1340, 455], [1302, 492], [1340, 490],
                        [700, 600], [722, 612], [738, 622], [1236, 622], [1252, 605], [1270, 595]]) {
    ctx.beginPath();
    ctx.arc(x, y, 8, 0, Math.PI * 2);
    ctx.fill();
  }
  ctx.fillStyle = 'rgba(230,230,0,.55)';
  for (const [x0, y0, x1, y1] of [[742, 448, 1350, 502], [690, 582, 1275, 636]]) {
    for (let y = y0; y < y1; y += 6) for (let x = x0; x < x1; x += 5) ctx.fillRect(x, y, 1, 1);
  }
  line([[740, 446], [1346, 446], [1351, 452], [1351, 496], [1346, 502], [740, 502], [740, 446]], '#ff0');
  line([[690, 580], [1274, 580], [1280, 586]], '#ff0');
  line([[1280, 630], [1274, 636], [690, 636], [690, 580]], '#ff0');
  line([[1060, 798], [1136, 872]], 'rgba(190,190,0,.7)', 5);
  ctx.fillStyle = 'rgba(110,110,110,.7)';
  for (const x of [761, 972, 1182, 1208]) {
    ctx.beginPath();
    ctx.moveTo(x - 6, 895); ctx.lineTo(x, 889); ctx.lineTo(x + 6, 895); ctx.lineTo(x, 901);
    ctx.fill();
  }

  // Vertex handles.
  for (const [x, y] of [[1118, 142], [1369, 393], [690, 1057]]) {
    ctx.fillStyle = '#606060';
    ctx.fillRect(x - 5, y - 5, 10, 10);
    ctx.strokeStyle = '#fff';
    ctx.lineWidth = 1;
    ctx.strokeRect(x - 4.500, y - 4.500, 9, 9);
  }
  ctx.restore();
}

new ResizeObserver(draw).observe(host);
```
